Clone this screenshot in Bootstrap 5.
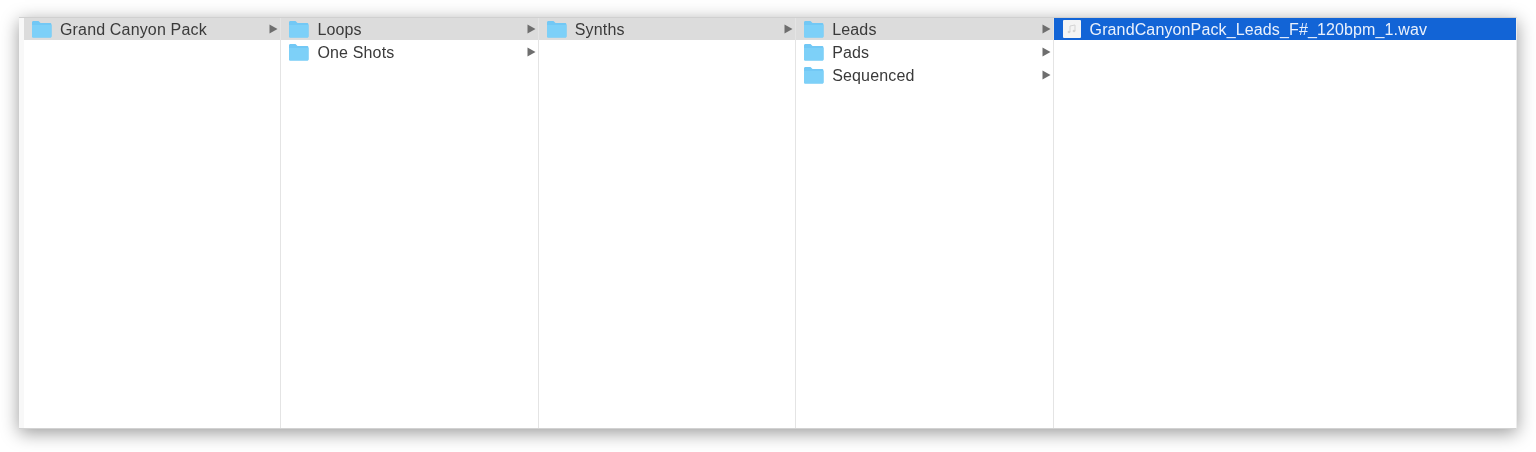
<!DOCTYPE html>
<html lang="en">
  <head>
    <meta charset="UTF-8" />
    <meta name="viewport" content="width=device-width, initial-scale=1.0" />
    <title>Finder Columns</title>
    <link
      href="https://cdn.jsdelivr.net/npm/bootstrap@5.3.3/dist/css/bootstrap.min.css"
      rel="stylesheet"
    />
    <style>
      body {
        background: #fff;
        height: 452px;
        overflow: hidden;
        padding: 17px 19px 23px 19px;
      }
      .finder-window {
        height: 412px;
        background: #fff;
        border-top: 1px solid #d0d0d0;
        border-bottom: 1px solid #d2d2d2;
        border-right: 1px solid #ececec;
        box-shadow: 0 4px 17px rgba(0, 0, 0, 0.4);
      }
      .finder-gutter {
        width: 5px;
        flex: none;
        background: #f8f8f8;
      }
      .finder-col {
        width: 257.4px;
        flex: none;
        border-right: 1px solid #e4e4e4;
      }
      .finder-col.last-col {
        flex: 1 1 auto;
        width: auto;
        border-right: 0;
      }
      .finder-row {
        height: 23px;
        padding-left: 7px;
        padding-right: 2px;
        border-bottom: 1px solid transparent;
        background-clip: padding-box;
        font-family: "Liberation Sans", Arial, sans-serif;
        font-size: 16px;
        letter-spacing: 0.16px;
        color: #3a3a3a;
      }
      .finder-row.open-row {
        background-color: #dcdcdc;
      }
      .finder-row.picked-row {
        background-color: #1264d6;
        color: #eaf1fc;
        padding-left: 9px;
        letter-spacing: 0.13px;
      }
      .row-name {
        margin-left: 8px;
        padding-top: 2px;
        filter: blur(0.55px);
      }
      .picked-row .row-name {
        margin-left: 9px;
      }
      .folder-icon,
      .file-icon,
      .arrow-icon {
        flex: none;
        filter: blur(0.5px);
      }
    </style>
  </head>
  <body>
    <div class="finder-window d-flex" id="finder"><div class="finder-gutter"></div></div>

    <script>
      const folder = `<svg class="folder-icon" width="21" height="18" viewBox="0 0 21 18">
        <path d="M1 2.500C1 1.500 1.600 1 2.500 1H7.500L9.500 3H19C20 3 20.500 3.600 20.500 4.500V16C20.500 17 20 17.500 19 17.500H2.500C1.500 17.500 1 17 1 16Z" fill="#72c8f5"/>
        <path d="M1 5H20.500V16C20.500 17 20 17.500 19 17.500H2.500C1.500 17.500 1 17 1 16Z" fill="#7dd0f8"/>
      </svg>`;
      const arrow = `<svg class="arrow-icon ms-auto" width="9" height="10" viewBox="0 0 9 10"><path d="M0.500 0.500L8.500 5L0.500 9.500Z" fill="#6e6e6e"/></svg>`;
      const file = `<svg class="file-icon" width="18" height="18" viewBox="0 0 18 18">
        <rect width="18" height="18" rx="1" fill="#f4f4f4"/>
        <path d="M7 12V6L12 5V11" fill="none" stroke="#d4d4d4"/>
        <circle cx="6" cy="12" r="1.300" fill="#d4d4d4"/><circle cx="11" cy="11" r="1.300" fill="#d4d4d4"/>
      </svg>`;

      const columns = [
        [{ name: "Grand Canyon Pack", open: true }],
        [{ name: "Loops", open: true }, { name: "One Shots" }],
        [{ name: "Synths", open: true }],
        [{ name: "Leads", open: true }, { name: "Pads" }, { name: "Sequenced" }],
        [{ name: "GrandCanyonPack_Leads_F#_120bpm_1.wav", picked: true }],
      ];

      const finder = document.getElementById("finder");
      columns.forEach((items, i) => {
        const col = document.createElement("div");
        col.className = "finder-col" + (i === columns.length - 1 ? " last-col" : "");
        items.forEach((item) => {
          const row = document.createElement("div");
          row.className = "finder-row d-flex align-items-center";
          if (item.open) row.classList.add("open-row");
          if (item.picked) row.classList.add("picked-row");
          row.innerHTML =
            (item.picked ? file : folder) +
            `<span class="row-name text-nowrap">${item.name}</span>` +
            (item.picked ? "" : arrow);
          col.appendChild(row);
        });
        finder.appendChild(col);
      });
    </script>
    <script src="https://cdn.jsdelivr.net/npm/bootstrap@5.3.3/dist/js/bootstrap.bundle.min.js"></script>
  </body>
</html>
